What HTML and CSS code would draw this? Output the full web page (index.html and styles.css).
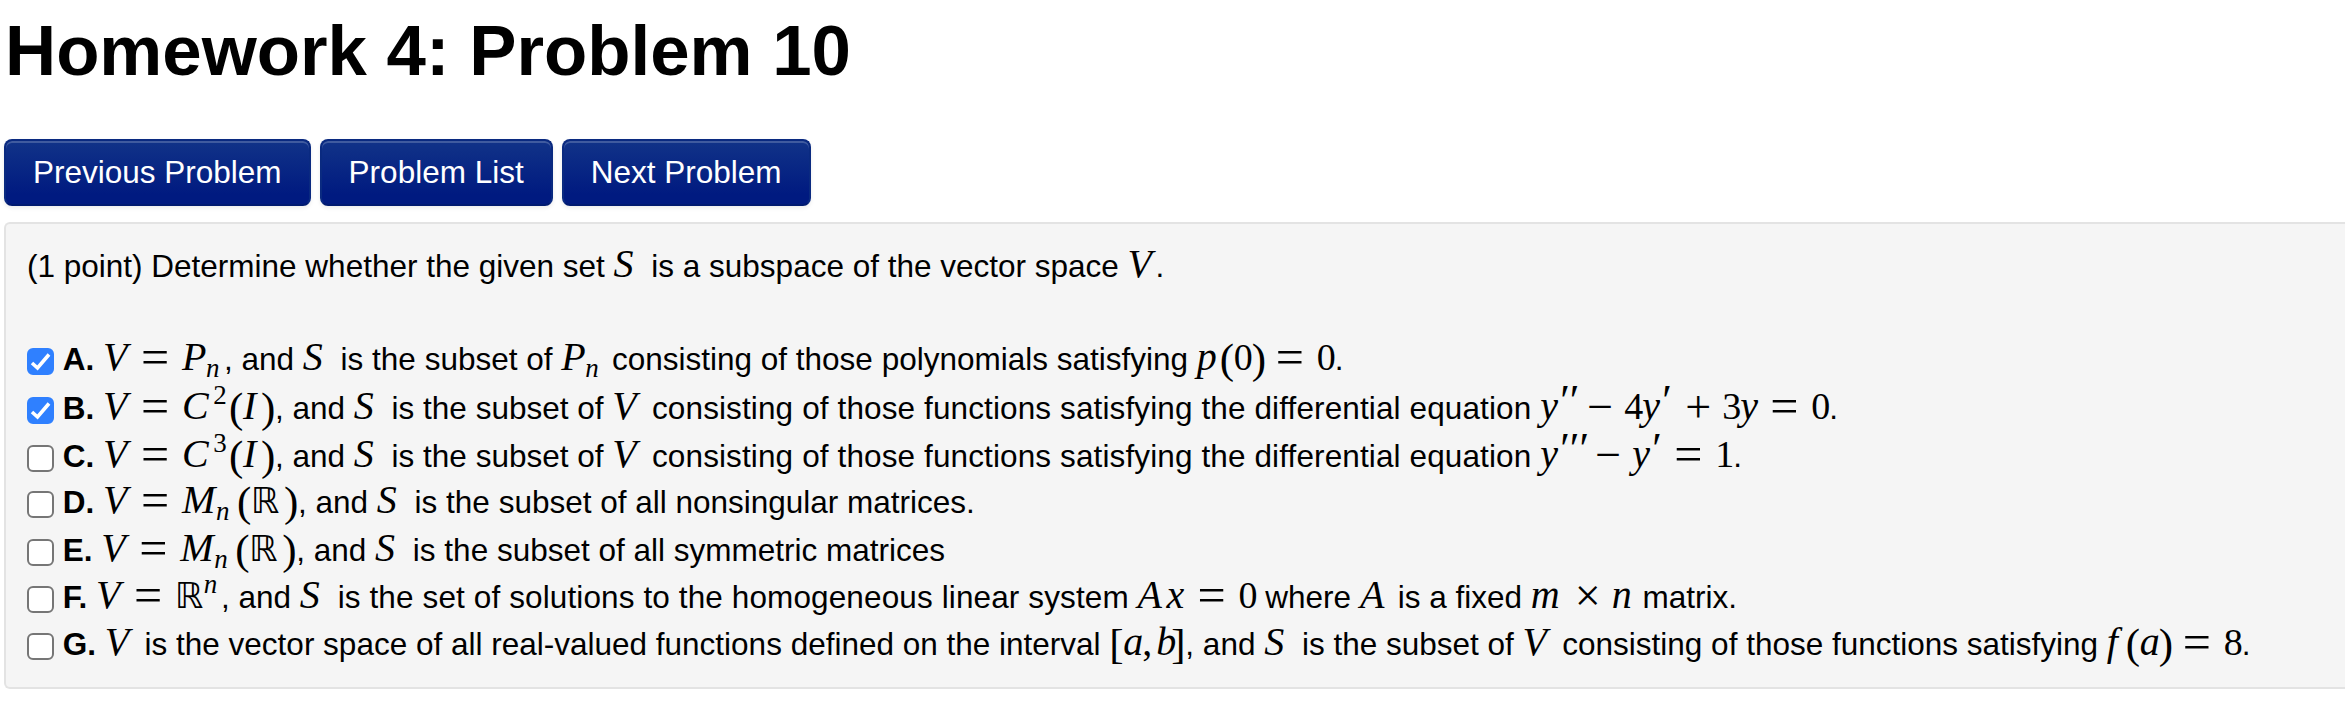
FILE: index.html
```html
<!DOCTYPE html>
<html lang="en">
<head>
<meta charset="utf-8">
<title>Homework 4: Problem 10</title>
<link rel="stylesheet" href="styles.css">
</head>
<body>
<h1 class="title">Homework 4: Problem 10</h1>
<nav class="nav">
  <a class="btn">Previous Problem</a>
  <a class="btn">Problem List</a>
  <a class="btn">Next Problem</a>
</nav>
<main class="well">
  <p class="intro">(1 point) Determine whether the given set <span class="m"><i class="S">S</i></span> is a subspace of the vector space <span class="m"><i class="V">V</i></span>.</p>
  <div class="opt h49"><input type="checkbox" checked> <b>A.</b> <span class="m"><i class="V">V</i><span class="eq">=</span><i class="P">P</i><sub class="n">n</sub></span>, and <span class="m"><i class="S">S</i></span> is the subset of <span class="m"><i class="P">P</i><sub class="n">n</sub></span> consisting of those polynomials satisfying <span class="m"><i class="p">p</i><span class="par">(</span><span class="d">0</span><span class="par">)</span><span class="eq">=</span><span class="d">0</span></span>.</div>
  <div class="opt h48"><input type="checkbox" checked> <b>B.</b> <span class="m"><i class="V">V</i><span class="eq">=</span><i class="C">C</i><sup class="s">2</sup><span class="par">(</span><i class="I">I</i><span class="par">)</span></span>, and <span class="m"><i class="S">S</i></span> is the subset of <span class="m"><i class="V">V</i></span> <span class="wide">consisting of those functions satisfying the differential equation</span> <span class="m"><i class="y">y</i><span class="pr2">′′</span><span class="op">−</span><span class="d">4</span><i class="y">y</i><span class="pr">′</span><span class="op">+</span><span class="d">3</span><i class="y">y</i><span class="eq">=</span><span class="d">0</span></span>.</div>
  <div class="opt h46"><input type="checkbox"> <b>C.</b> <span class="m"><i class="V">V</i><span class="eq">=</span><i class="C">C</i><sup class="s">3</sup><span class="par">(</span><i class="I">I</i><span class="par">)</span></span>, and <span class="m"><i class="S">S</i></span> is the subset of <span class="m"><i class="V">V</i></span> <span class="wide">consisting of those functions satisfying the differential equation</span> <span class="m"><i class="y">y</i><span class="pr3">′′′</span><span class="op">−</span><i class="y">y</i><span class="pr">′</span><span class="eq">=</span><span class="d">1</span></span>.</div>
  <div class="opt h48"><input type="checkbox"> <b>D.</b> <span class="m"><i class="V">V</i><span class="eq">=</span><i class="M">M</i><sub class="n nM">n</sub><span class="par">(</span><span class="R">ℝ</span><span class="par">)</span></span>, and <span class="m"><i class="S">S</i></span> is the subset of all nonsingular matrices.</div>
  <div class="opt h47"><input type="checkbox"> <b>E.</b> <span class="m"><i class="V">V</i><span class="eq">=</span><i class="M">M</i><sub class="n nM">n</sub><span class="par">(</span><span class="R">ℝ</span><span class="par">)</span></span>, and <span class="m"><i class="S">S</i></span> is the subset of all symmetric matrices</div>
  <div class="opt h47"><input type="checkbox"> <b>F.</b> <span class="m"><i class="V">V</i><span class="eq">=</span><span class="R RF">ℝ</span><sup class="s n2">n</sup></span>, and <span class="m"><i class="S">S</i></span> <span class="wider">is the set of solutions to the homogeneous linear system</span> <span class="m"><i class="A">A</i><i class="x">x</i><span class="eq">=</span><span class="d">0</span></span> where <span class="m"><i class="A">A</i></span> is a fixed <span class="m"><i class="mm">m</i><span class="op">×</span><i class="nn">n</i></span> matrix.</div>
  <div class="opt h47"><input type="checkbox"> <b>G.</b> <span class="m"><i class="V">V</i></span> is the vector space of all real-valued functions defined on the interval <span class="m"><span class="par">[</span><i class="a">a</i><span class="comma">,</span><i class="b">b</i><span class="par">]</span></span>, and <span class="m"><i class="S">S</i></span> is the subset of <span class="m"><i class="V">V</i></span> consisting of those functions satisfying <span class="m"><i class="f">f</i><span class="par">(</span><i class="a">a</i><span class="par">)</span><span class="eq">=</span><span class="d">8</span></span>.</div>
</main>
</body>
</html>
```
FILE: styles.css
```css
html, body { margin: 0; padding: 0; background: #fff; }
body {
  font-family: "Liberation Sans", Arial, sans-serif;
  font-size: 31.5px;
  color: #000;
  overflow: hidden;
  padding-left: 4px;
}
.title {
  margin: 0;
  padding-left: 1px;
  height: 139px;
  font-size: 70.8px;
  line-height: 102px;
  font-weight: 700;
}
.nav { display: flex; gap: 9px; }
.btn {
  box-sizing: border-box;
  height: 67px;
  padding: 0 27px;
  display: flex;
  align-items: center;
  color: #fff;
  background: linear-gradient(#113388, #001a80 85%);
  border: 2px solid #0a2a80;
  border-bottom-color: #001a70;
  border-radius: 8px;
  box-shadow: inset 0 2px 0 rgba(255,255,255,.2), 0 2px 4px rgba(0,0,0,.08);
}
.well {
  box-sizing: border-box;
  margin-top: 16px;
  height: 467px;
  padding: 0 0 0 21px;
  background: #f5f5f5;
  border: 2px solid #e3e3e3;
  border-right: 0;
  border-radius: 6px 0 0 6px;
}
.intro { margin: 0 0 52px; height: 60px; line-height: 84px; }
.opt { white-space: nowrap; line-height: 46px; }
.h49 { height: 49px; }
.h48 { height: 48px; }
.h47 { height: 47px; }
.h46 { height: 46px; }
.opt input {
  appearance: none;
  box-sizing: border-box;
  width: 27px;
  height: 27px;
  margin: 0;
  vertical-align: -5px;
  background: #fff;
  border: 2px solid #767676;
  border-radius: 6px;
}
.opt input:checked {
  border-color: #2f80ff;
  background: #2f80ff url("data:image/svg+xml,%3Csvg xmlns='http://www.w3.org/2000/svg' viewBox='0 0 23 23'%3E%3Cpath d='M3 13l5.5 5L20 4.500' fill='none' stroke='%23fff' stroke-width='3.600'/%3E%3C/svg%3E") center / 100% 100% no-repeat;
}
.opt b { font-weight: 700; }
.wide { letter-spacing: .12px; }
.wider { letter-spacing: .12px; }

.m, .m * { line-height: 0; }
.m { font-family: "Liberation Serif", serif; font-size: 40px; }
.m i, .m span, .m sub, .m sup { display: inline-block; text-align: left; }
.V { width: 31px; }
.intro .V { width: 28px; }
.S { width: 29px; }
.P { width: 24px; }
.C { width: 29px; }
.I { width: 18px; }
.M { width: 34px; }
.A { width: 29px; }
.p { width: 23px; }
.y { width: 20px; }
.x { width: 21px; }
.a { width: 19px; }
.b { width: 15px; }
.f { width: 19px; }
.mm { width: 33px; }
.nn { width: 22px; }
.m .d { width: 18px; font-size: 38px; text-align: center; }
.m .comma { width: 14px; }
.m .par { width: 14px; font-size: 43px; vertical-align: -3px; text-align: center; }
.m .eq { width: 28px; margin: 0 13px 0 10px; font-size: 50px; vertical-align: -4px; text-align: center; }
.m .V + .eq { margin-left: 7px; }
.m .op { width: 28px; margin: 0 10px; font-size: 46px; vertical-align: -3px; text-align: center; }
.m .R { width: 33px; font-family: "DejaVu Sans", sans-serif; font-size: 36px; }
.m .RF { width: 25px; }
.m .n { font-size: 27px; width: 18px; vertical-align: -7px; font-style: italic; }
.m .nM { width: 21px; }
.m .s { font-size: 27px; width: 18px; vertical-align: 15px; text-align: center; }
.m .n2 { font-style: italic; width: 21px; }
.m .pr { width: 12px; font-size: 44px; vertical-align: 4px; }
.m .pr2 { width: 16px; font-size: 44px; vertical-align: 4px; }
.m .pr3 { width: 24px; font-size: 44px; vertical-align: 4px; }
```
